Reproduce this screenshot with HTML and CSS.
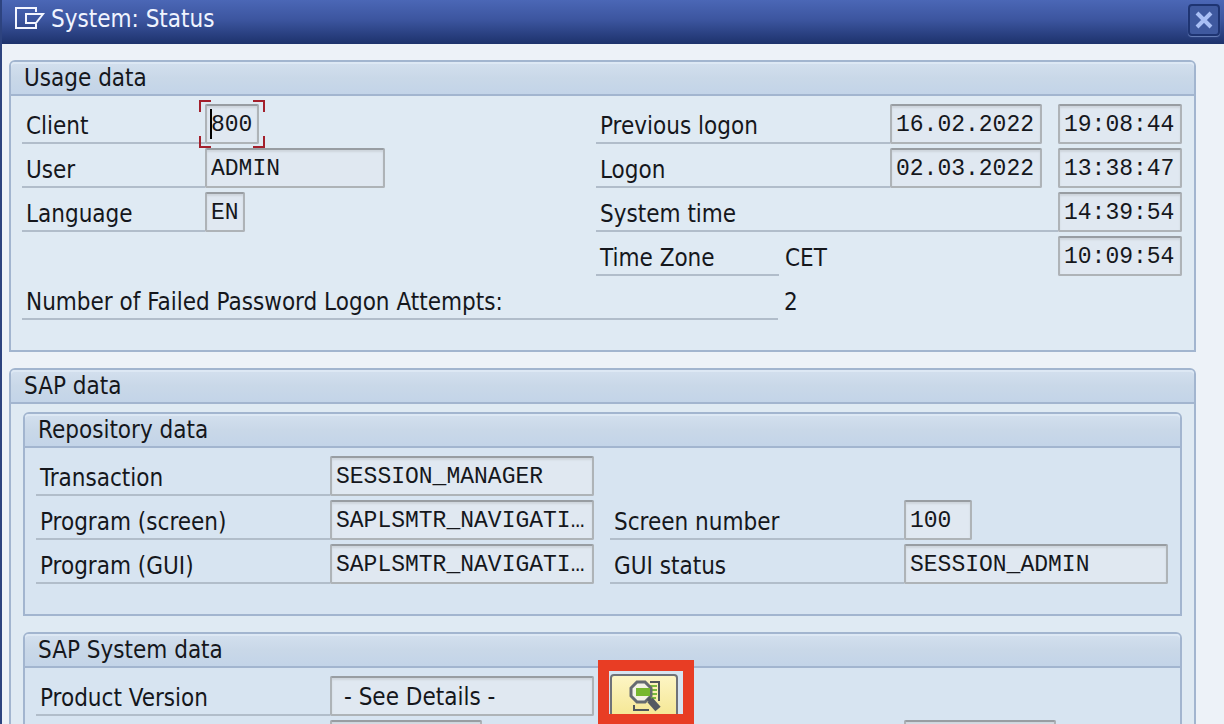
FILE: index.html
```html
<!DOCTYPE html>
<html lang="en">
<head>
  <meta charset="utf-8">
  <title>System: Status</title>
  <link rel="stylesheet" href="styles.css">
</head>
<body>
  <div class="dialog">
    <div class="titlebar">
      <svg class="title-icon" width="32" height="26" viewBox="0 0 32 26" fill="none" stroke="#f4f6ff" stroke-width="2">
        <path d="M22 7V3H2v20h20v-4"/>
        <path d="M12 9h17l-7 9H12z"/>
      </svg>
      <h1 class="title">System: Status</h1>
      <button class="close-btn" type="button" aria-label="Close">
        <svg width="18" height="18" viewBox="0 0 18 18" stroke="#a9bff5" stroke-width="4">
          <path d="M2 2l14 14M16 2L2 16"/>
        </svg>
      </button>
    </div>

    <div class="content">
      <section class="group">
        <h2 class="group-title">Usage data</h2>
        <div class="group-body">
          <div class="row">
            <div class="left">
              <label class="label" for="client">Client</label>
              <div class="focus-field">
                <input class="field w-client" id="client" value="800" readonly>
                <span class="caret"></span>
                <svg class="focus-corners" width="68" height="50" viewBox="0 0 68 50" fill="none" stroke="#a3202c" stroke-width="2">
                  <path d="M2 13V2h11M55 2h11v11M66 37v11H55M13 48H2V37"/>
                </svg>
              </div>
            </div>
            <div class="right">
              <label class="label grow" for="prevDate">Previous logon</label>
              <input class="field w-date" id="prevDate" value="16.02.2022" readonly>
              <input class="field w-time spaced" aria-label="Previous logon time" value="19:08:44" readonly>
            </div>
          </div>
          <div class="row">
            <div class="left">
              <label class="label" for="user">User</label>
              <input class="field w-user" id="user" value="ADMIN" readonly>
            </div>
            <div class="right">
              <label class="label grow" for="logonDate">Logon</label>
              <input class="field w-date" id="logonDate" value="02.03.2022" readonly>
              <input class="field w-time spaced" aria-label="Logon time" value="13:38:47" readonly>
            </div>
          </div>
          <div class="row">
            <div class="left">
              <label class="label" for="language">Language</label>
              <input class="field w-lang" id="language" value="EN" readonly>
            </div>
            <div class="right">
              <label class="label grow" for="sysTime">System time</label>
              <input class="field w-time" id="sysTime" value="14:39:54" readonly>
            </div>
          </div>
          <div class="row">
            <div class="left"></div>
            <div class="right">
              <label class="label" for="zoneTime">Time Zone</label>
              <span class="value grow">CET</span>
              <input class="field w-time" id="zoneTime" value="10:09:54" readonly>
            </div>
          </div>
          <div class="row">
            <label class="label label-wide" for="failed">Number of Failed Password Logon Attempts:</label>
            <output class="value" id="failed">2</output>
          </div>
        </div>
      </section>

      <section class="group">
        <h2 class="group-title">SAP data</h2>
        <div class="group-inner">
          <section class="group sub">
            <h3 class="group-title">Repository data</h3>
            <div class="group-body">
              <div class="row">
                <label class="label" for="transaction">Transaction</label>
                <input class="field w-name" id="transaction" value="SESSION_MANAGER" readonly>
              </div>
              <div class="row">
                <label class="label" for="program">Program (screen)</label>
                <input class="field w-name" id="program" value="SAPLSMTR_NAVIGATI…" readonly>
                <label class="label spaced" for="screen">Screen number</label>
                <input class="field w-screen" id="screen" value="100" readonly>
              </div>
              <div class="row">
                <label class="label" for="programGui">Program (GUI)</label>
                <input class="field w-name" id="programGui" value="SAPLSMTR_NAVIGATI…" readonly>
                <label class="label spaced" for="guiStatus">GUI status</label>
                <input class="field w-name" id="guiStatus" value="SESSION_ADMIN" readonly>
              </div>
            </div>
          </section>

          <section class="group sub">
            <h3 class="group-title">SAP System data</h3>
            <div class="group-body">
              <div class="row">
                <label class="label" for="product">Product Version</label>
                <input class="field w-name plain" id="product" value="- See Details -" readonly>
                <div class="details">
                  <button class="details-btn" type="button" aria-label="Details">
                    <svg width="34" height="34" viewBox="0 0 34 34" fill="none">
                      <path d="M21 3h9v19M5 26v5h15" stroke="#50555b" stroke-width="2"/>
                      <path d="M20 7h8M20 11h8M20 15h8M20 19h7" stroke="#79b93c" stroke-width="2"/>
                      <path d="M8 3h8l6 6v8l-6 6H8l-6-6V9z" fill="#f4f3e4" stroke="#666b70" stroke-width="3"/>
                      <path d="M7 9h14v8H7z" fill="#78b82e"/>
                      <path d="M19 19l3 3" stroke="#555a62" stroke-width="4"/>
                      <path d="M21 21l8 9" stroke="#555a62" stroke-width="7"/>
                    </svg>
                  </button>
                  <span class="highlight"></span>
                </div>
              </div>
              <div class="row">
                <span class="label"></span>
                <input class="field w-date" aria-label="Installation value" readonly>
                <span class="label after-date"></span>
                <input class="field w-date" aria-label="System value" readonly>
              </div>
            </div>
          </section>
        </div>
      </section>
    </div>
  </div>
</body>
</html>
```
FILE: styles.css
```css
* {
  box-sizing: border-box;
}

body {
  margin: 0;
  font-family: "DejaVu Sans Condensed", "DejaVu Sans", sans-serif;
  font-stretch: condensed;
  font-size: 24px;
  color: #15171c;
  background-color: #edf2f8;
}

.dialog {
  height: 100vh;
  overflow: hidden;
  border-left: 2px solid #2d437f;
}

/* title bar */
.titlebar {
  display: flex;
  align-items: center;
  height: 44px;
  padding: 0 4px 4px 12px;
  background: linear-gradient(#4b67b6, #3c559f 45%, #1d326c);
}

.title-icon {
  margin-bottom: 4px;
}

.title {
  flex: 1;
  margin: 0 0 2px 5px;
  font-size: 24px;
  font-weight: normal;
  color: #f0f4ff;
}

.close-btn {
  display: flex;
  align-items: center;
  justify-content: center;
  width: 32px;
  height: 32px;
  padding: 0;
  border: 2px solid #1e3472;
  border-radius: 4px;
  background-color: #3f599f;
  box-shadow: 0 1px 1px #6c83bd;
}

/* groups */
.content {
  display: flex;
  flex-direction: column;
  gap: 16px;
  padding: 16px 28px 0 7px;
}

.group {
  border: 2px solid #a2b5cf;
  border-radius: 6px 6px 0 0;
  background-color: #dfeaf3;
}

.group.sub {
  background-color: #d7e4f1;
}

.group-title {
  height: 34px;
  margin: 0;
  padding-left: 13px;
  border-bottom: 2px solid #a2b5cf;
  border-radius: 4px 4px 0 0;
  background: linear-gradient(#d3e0ee, #c9d8e8 50%, #c3d4e8);
  box-shadow: inset 0 2px 0 #dde8f4;
  font-size: 24px;
  font-weight: normal;
  line-height: 33px;
}

.group-body {
  display: flex;
  flex-direction: column;
  gap: 4px;
  padding: 8px 12px 30px 11px;
}

.group-inner {
  display: flex;
  flex-direction: column;
  gap: 16px;
  padding: 8px 12px 16px;
}

.row {
  display: flex;
  height: 40px;
}

.left {
  display: flex;
  width: 574px;
}

.right {
  display: flex;
  flex: 1;
}

.label {
  width: 183px;
  padding-left: 4px;
  border-bottom: 2px solid #b1bdca;
  line-height: 44px;
  white-space: nowrap;
}

.label-wide {
  width: 756px;
}

.sub .label {
  width: 294px;
}

.value {
  padding-left: 6px;
  line-height: 44px;
}

.label.grow,
.value.grow {
  flex: 1;
}

.spaced {
  margin-left: 16px;
}

.sub .after-date {
  margin-left: 128px;
}

/* fields */
.field {
  height: 40px;
  padding: 2px 0 0 4px;
  border: 2px solid #aeb3b7;
  border-top-color: #989da2;
  border-radius: 2px;
  background-color: #e0e8f1;
  box-shadow: inset 0 2px 2px #ced5dc;
  font-family: "Liberation Mono", monospace;
  font-size: 23px;
  color: #15171c;
  outline: none;
}

.field.plain {
  padding-left: 12px;
  font-family: "DejaVu Sans Condensed", "DejaVu Sans", sans-serif;
  font-stretch: condensed;
  font-size: 24px;
}

.w-client {
  width: 54px;
}

.w-user {
  width: 180px;
}

.w-lang {
  width: 40px;
}

.w-date {
  width: 152px;
}

.w-time {
  width: 124px;
}

.w-name {
  width: 264px;
}

.w-screen {
  width: 68px;
}

/* focused field */
.focus-field {
  position: relative;
}

.caret {
  position: absolute;
  top: 5px;
  left: 5px;
  width: 2px;
  height: 30px;
  background-color: #000;
}

.focus-corners {
  position: absolute;
  top: -5px;
  left: -7px;
}

/* details button */
.details {
  position: relative;
  margin-left: 16px;
}

.details-btn {
  display: flex;
  justify-content: center;
  width: 68px;
  height: 44px;
  margin-top: -2px;
  padding: 3px 0 0 4px;
  border: 2px solid #6f7278;
  border-radius: 4px;
  background: linear-gradient(#fdf5c4, #f5e794);
}

.highlight {
  position: absolute;
  top: -16px;
  left: -12px;
  width: 96px;
  height: 66px;
  border: 11px solid #e83d24;
  border-bottom-width: 12px;
}
```
